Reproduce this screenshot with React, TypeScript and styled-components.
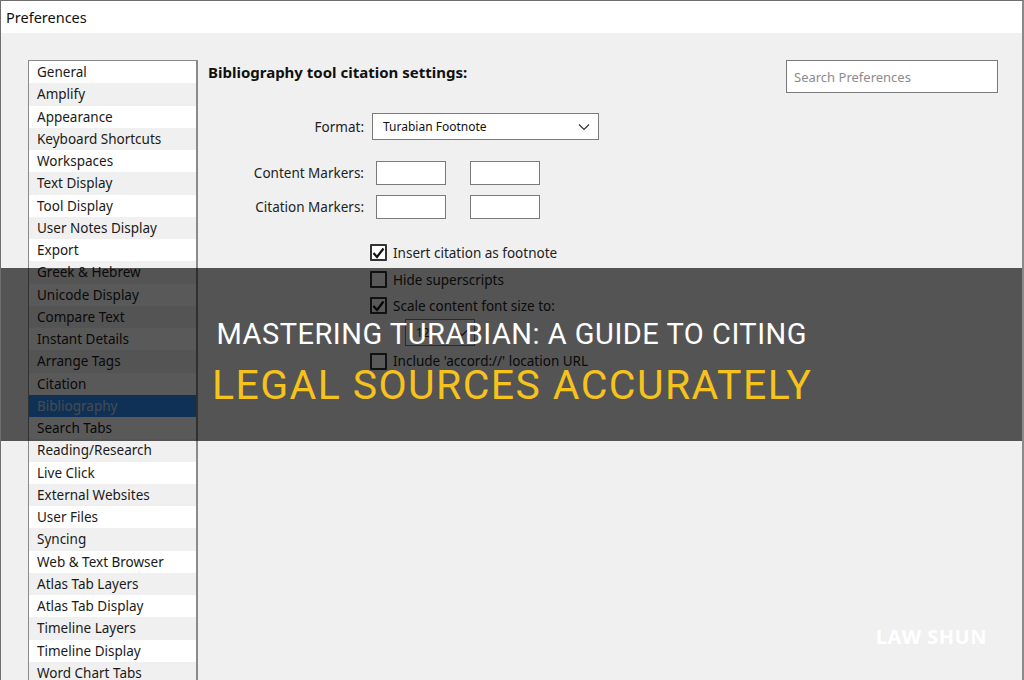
import React from 'react';
import styled, { createGlobalStyle } from 'styled-components';

const GlobalStyle = createGlobalStyle`
  html, body {
    margin: 0;
    padding: 0;
    background: #f0f0f0;
    overflow: hidden;
  }
  * {
    box-sizing: border-box;
  }
`;

const Window = styled.div`
  position: relative;
  width: 1024px;
  height: 680px;
  display: flex;
  flex-direction: column;
  background: #f0f0f0;
  border-left: 1px solid #6e6e6e;
  border-top: 1px solid #6e6e6e;
  border-right: 2px solid #8a8a8a;
  overflow: hidden;
  font-family: 'Noto Sans', 'Open Sans', sans-serif;
  color: #1a1a1a;
`;

const TitleBar = styled.div`
  height: 32px;
  flex: none;
  display: flex;
  align-items: center;
  padding-left: 5px;
  background: #ffffff;
  font-size: 14.5px;
  color: #111;
`;

const Body = styled.div`
  flex: 1;
  display: flex;
  align-items: flex-start;
`;

const ListBox = styled.ul`
  list-style: none;
  margin: 27px 0 0 27px;
  padding: 0;
  width: 170px;
  flex: none;
  background: #ffffff;
  border: 1px solid #8a8a8a;
  border-right-width: 2px;
`;

const ListItem = styled.li<{ $odd: boolean; $selected?: boolean }>`
  height: 22.25px;
  display: flex;
  align-items: center;
  padding-left: 8px;
  font-size: 13.5px;
  white-space: nowrap;
  background: ${(p) => (p.$selected ? '#2a8cf2' : p.$odd ? '#f0f0f0' : '#ffffff')};
  color: ${(p) => (p.$selected ? '#c4d8ee' : '#1a1a1a')};
`;

const Panel = styled.div`
  flex: 1;
  display: flex;
  flex-direction: column;
  padding: 29px 24px 0 10px;
`;

const PanelHead = styled.div`
  display: flex;
  align-items: flex-start;
  justify-content: space-between;
`;

const Heading = styled.h2`
  margin: 0;
  font-size: 15px;
  font-weight: 700;
  line-height: 20px;
  color: #111;
`;

const SearchBox = styled.div`
  width: 212px;
  height: 33px;
  margin-top: -2px;
  display: flex;
  align-items: center;
  padding-left: 7px;
  background: #ffffff;
  border: 1px solid #7a7a7a;
  font-size: 13px;
  color: #8c8c8c;
`;

const FormGrid = styled.div`
  display: grid;
  grid-template-columns: 156px auto;
  column-gap: 8px;
  align-items: center;
  margin-top: 20px;
`;

const Label = styled.span<{ $top?: number }>`
  text-align: right;
  font-size: 13.5px;
  color: #222;
  margin-top: ${(p) => p.$top || 0}px;
`;

const Select = styled.div`
  width: 227px;
  height: 27px;
  display: flex;
  align-items: center;
  justify-content: space-between;
  padding: 0 8px 0 10px;
  background: #ffffff;
  border: 1px solid #7a7a7a;
  font-size: 12px;
  color: #111;
`;

const MarkerPair = styled.div<{ $top?: number }>`
  display: flex;
  gap: 24px;
  margin-left: 4px;
  margin-top: ${(p) => p.$top || 0}px;
`;

const TextBox = styled.div`
  width: 70px;
  height: 24px;
  background: #ffffff;
  border: 1px solid #7a7a7a;
`;

const Options = styled.div`
  display: flex;
  flex-direction: column;
  margin: 20px 0 0 162px;
`;

const OptionRow = styled.div<{ $h: number }>`
  height: ${(p) => p.$h}px;
  display: flex;
  align-items: center;
  gap: 6px;
  font-size: 13.5px;
  color: #222;
`;

const Box = styled.span`
  width: 17px;
  height: 17px;
  flex: none;
  display: flex;
  align-items: center;
  justify-content: center;
  background: #ffffff;
  border: 2px solid #333;
  border-radius: 1px;
`;

const SizeSelect = styled.div`
  width: 70px;
  height: 27px;
  margin: 1px 0 3px 35px;
  display: flex;
  align-items: center;
  justify-content: space-between;
  padding: 0 6px 0 10px;
  background: #ffffff;
  border: 1px solid #7a7a7a;
  font-size: 12px;
`;

const Banner = styled.div`
  position: absolute;
  left: 0;
  right: 0;
  top: 267px;
  height: 173px;
  display: flex;
  flex-direction: column;
  align-items: center;
  padding-top: 49px;
  gap: 11px;
  background: rgba(0, 0, 0, 0.65);
  font-family: Roboto, 'Liberation Sans', sans-serif;
  text-transform: uppercase;
`;

const BannerLine = styled.div<{ $size: number; $color: string; $spacing: number; $lh: number }>`
  font-size: ${(p) => p.$size}px;
  line-height: ${(p) => p.$lh}px;
  letter-spacing: ${(p) => p.$spacing}px;
  margin-right: -${(p) => p.$spacing}px;
  color: ${(p) => p.$color};
  white-space: nowrap;
`;

const Watermark = styled.div`
  position: absolute;
  right: 35px;
  bottom: 30px;
  font-family: 'Open Sans', sans-serif;
  font-weight: 700;
  font-size: 20px;
  letter-spacing: 0.5px;
  color: #ffffff;
`;

const Chevron = () => (
  <svg width="12" height="8" viewBox="0 0 12 8">
    <path d="M1 1.5 L6 6.5 L11 1.5" fill="none" stroke="#333" strokeWidth="1.2" />
  </svg>
);

const Check = () => (
  <svg width="13" height="12" viewBox="0 0 13 12">
    <path d="M1.5 6 L5 10 L11.5 1.5" fill="none" stroke="#111" strokeWidth="2.2" />
  </svg>
);

const items = [
  'General', 'Amplify', 'Appearance', 'Keyboard Shortcuts', 'Workspaces', 'Text Display',
  'Tool Display', 'User Notes Display', 'Export', 'Greek & Hebrew', 'Unicode Display',
  'Compare Text', 'Instant Details', 'Arrange Tags', 'Citation', 'Bibliography', 'Search Tabs',
  'Reading/Research', 'Live Click', 'External Websites', 'User Files', 'Syncing',
  'Web & Text Browser', 'Atlas Tab Layers', 'Atlas Tab Display', 'Timeline Layers',
  'Timeline Display', 'Word Chart Tabs',
];

const App: React.FC = () => {
  return (
    <Window>
      <GlobalStyle />
      <TitleBar>Preferences</TitleBar>
      <Body>
        <ListBox>
          {items.map((name, i) => (
            <ListItem key={name} $odd={i % 2 === 1} $selected={name === 'Bibliography'}>
              {name}
            </ListItem>
          ))}
        </ListBox>
        <Panel>
          <PanelHead>
            <Heading>Bibliography tool citation settings:</Heading>
            <SearchBox>Search Preferences</SearchBox>
          </PanelHead>
          <FormGrid>
            <Label>Format:</Label>
            <Select>
              Turabian Footnote
              <Chevron />
            </Select>
            <Label $top={21}>Content Markers:</Label>
            <MarkerPair $top={21}>
              <TextBox />
              <TextBox />
            </MarkerPair>
            <Label $top={10}>Citation Markers:</Label>
            <MarkerPair $top={10}>
              <TextBox />
              <TextBox />
            </MarkerPair>
          </FormGrid>
          <Options>
            <OptionRow $h={27}>
              <Box><Check /></Box>
              Insert citation as footnote
            </OptionRow>
            <OptionRow $h={27}>
              <Box />
              Hide superscripts
            </OptionRow>
            <OptionRow $h={25}>
              <Box><Check /></Box>
              Scale content font size to:
            </OptionRow>
            <SizeSelect>
              12
              <Chevron />
            </SizeSelect>
            <OptionRow $h={24}>
              <Box />
              Include 'accord://' location URL
            </OptionRow>
          </Options>
        </Panel>
      </Body>
      <Banner>
        <BannerLine $size={29} $lh={34} $spacing={0.5} $color="#ffffff">
          Mastering Turabian: A Guide to Citing
        </BannerLine>
        <BannerLine $size={41} $lh={46} $spacing={1.4} $color="#f6c21c">
          Legal Sources Accurately
        </BannerLine>
      </Banner>
      <Watermark>LAW SHUN</Watermark>
    </Window>
  );
};

export default App;
